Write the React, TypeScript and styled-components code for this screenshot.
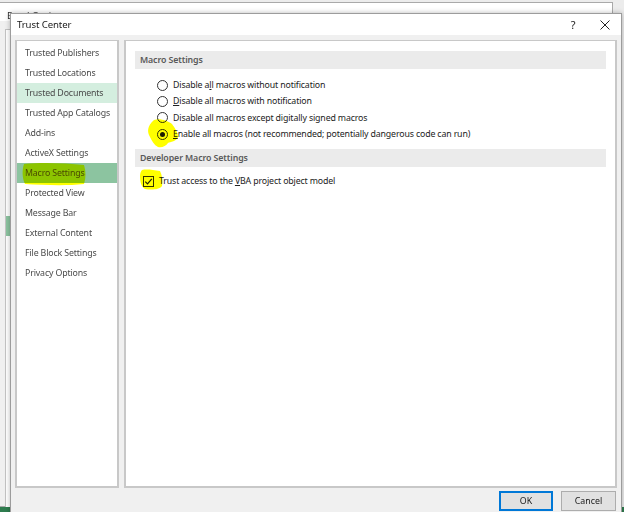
import React from "react";
import styled, { createGlobalStyle } from "styled-components";

const Global = createGlobalStyle`
  html, body { margin: 0; padding: 0; }
  body { background: #ececec; overflow: hidden; font-family: "Segoe UI", "Noto Sans", "Open Sans", sans-serif; }
`;

const Desktop = styled.div`
  position: relative;
  width: 624px;
  height: 512px;
  overflow: hidden;
  background: #ececec;
`;

const ExcelStrip = styled.div`
  position: absolute;
  left: 0;
  bottom: 0;
  width: 624px;
  height: 5px;
  background: #2f7d4f;
`;

const BackWindow = styled.div`
  position: absolute;
  left: -4px;
  top: 2px;
  width: 615px;
  height: 503px;
  background: #f0f0f0;
  border: 1px solid #a9a9a9;
  display: flex;
  flex-direction: column;
`;

const BackTitle = styled.div`
  box-sizing: border-box;
  height: 20px;
  background: #ffffff;
  display: flex;
  align-items: flex-start;
  padding: 7px 0 0 10px;
  font-size: 9.5px;
  color: #333;
  line-height: 11px;
`;

const BackTitleText = styled.span`
  flex: 1;
`;

const BackBody = styled.div`
  flex: 1;
  padding: 8px 0 0 8px;
  display: flex;
`;

const BackList = styled.div`
  width: 160px;
  height: 446px;
  background: #fff;
  border: 1px solid #c3c3c3;
  display: flex;
  flex-direction: column;
  padding-top: 186px;
`;

const BackSelected = styled.div`
  height: 20px;
  background: #8cc4a0;
`;

const Window = styled.div`
  position: absolute;
  left: 10px;
  top: 13px;
  width: 610px;
  height: 505px;
  background: #f0f0f0;
  border: 1px solid #9c9c9c;
  box-shadow: 0 0 5px rgba(0, 0, 0, 0.28);
  display: flex;
  flex-direction: column;
`;

const TitleBar = styled.div`
  height: 21px;
  background: #ffffff;
  display: flex;
  align-items: center;
  padding-left: 6px;
  font-size: 9.6px;
  letter-spacing: -0.1px;
  color: #1a1a1a;
`;

const TitleText = styled.span`
  flex: 1;
`;

const TitleButton = styled.div`
  width: 32px;
  height: 21px;
  display: flex;
  align-items: center;
  justify-content: center;
  font-size: 11px;
  color: #222;
`;

const Body = styled.div`
  flex: 1;
  display: flex;
  flex-direction: column;
  padding: 5px 4px 0 4px;
`;

const Panels = styled.div`
  display: flex;
  gap: 5px;
  height: 448px;
`;

const Panel = styled.div<{ $width?: number }>`
  box-sizing: border-box;
  ${(p) => (p.$width ? `width: ${p.$width}px;` : "flex: 1;")}
  height: 100%;
  background: #ffffff;
  border: 2px solid #c8c8c8;
  border-top-width: 1px;
  position: relative;
`;

const NavList = styled.div`
  display: flex;
  flex-direction: column;
  padding-top: 2px;
`;

const NavItem = styled.div<{ $state?: "hover" | "active" }>`
  height: 20px;
  display: flex;
  align-items: center;
  padding-left: 8px;
  font-size: 8.8px;
  letter-spacing: -0.15px;
  color: #4a4a4a;
  white-space: nowrap;
  position: relative;
  background: ${(p) =>
    p.$state === "active" ? "#8cc4a0" : p.$state === "hover" ? "#d4eedf" : "transparent"};
`;

const Content = styled.div`
  display: flex;
  flex-direction: column;
  padding: 10px 9px 0 9px;
`;

const SectionHeader = styled.div`
  height: 18px;
  background: #ebebeb;
  display: flex;
  align-items: center;
  padding-left: 5px;
  font-size: 8.8px;
  letter-spacing: -0.1px;
  font-weight: 600;
  color: #595959;
`;

const OptionGroup = styled.div`
  display: flex;
  flex-direction: column;
  padding: 8px 0 7px 22px;
`;

const OptionRow = styled.div`
  height: 16.3px;
  display: flex;
  align-items: center;
  gap: 5px;
  font-size: 8.8px;
  letter-spacing: -0.15px;
  color: #222;
  white-space: nowrap;
`;

const CheckRow = styled(OptionRow)`
  padding: 7px 0 0 8px;
  height: 14px;
  gap: 5px;
`;

const Radio = styled.span<{ $checked?: boolean }>`
  box-sizing: border-box;
  width: 11px;
  height: 11px;
  border-radius: 50%;
  border: 1px solid #333;
  background: #fff;
  display: flex;
  align-items: center;
  justify-content: center;
  flex: none;
  &::after {
    content: "";
    width: 5px;
    height: 5px;
    border-radius: 50%;
    background: ${(p) => (p.$checked ? "#1a1a1a" : "transparent")};
  }
`;

const Check = styled.span`
  box-sizing: border-box;
  width: 11px;
  height: 11px;
  border: 1px solid #333;
  background: #fff;
  display: flex;
  align-items: center;
  justify-content: center;
  flex: none;
`;

const U = styled.span`
  text-decoration: underline;
  text-underline-offset: 1px;
`;

const Marker = styled.svg`
  position: absolute;
  mix-blend-mode: multiply;
  pointer-events: none;
`;

const Footer = styled.div`
  display: flex;
  justify-content: flex-end;
  gap: 8px;
  padding: 3px 1px 0 0;
`;

const Button = styled.div<{ $default?: boolean }>`
  box-sizing: border-box;
  width: ${(p) => (p.$default ? 54 : 55)}px;
  height: 20px;
  background: #e1e1e1;
  border: ${(p) => (p.$default ? "2px solid #0078d7" : "1px solid #adadad")};
  display: flex;
  align-items: center;
  justify-content: center;
  font-size: 8.8px;
  color: #1a1a1a;
`;

const navItems = [
  "Trusted Publishers",
  "Trusted Locations",
  "Trusted Documents",
  "Trusted App Catalogs",
  "Add-ins",
  "ActiveX Settings",
  "Macro Settings",
  "Protected View",
  "Message Bar",
  "External Content",
  "File Block Settings",
  "Privacy Options",
];

export default function App() {
  return (
    <>
      <Global />
      <Desktop>
        <BackWindow>
          <BackTitle>
            <BackTitleText>Excel Options</BackTitleText>
          </BackTitle>
          <BackBody>
            <BackList>
              <BackSelected />
            </BackList>
          </BackBody>
        </BackWindow>
        <ExcelStrip />
        <Window>
          <TitleBar>
            <TitleText>Trust Center</TitleText>
            <TitleButton>?</TitleButton>
            <TitleButton>
              <svg width="10" height="10" viewBox="0 0 10 10">
                <path d="M0.5 0.5 L9.5 9.5 M9.5 0.5 L0.5 9.5" stroke="#222" strokeWidth="1" />
              </svg>
            </TitleButton>
          </TitleBar>
          <Body>
            <Panels>
              <Panel $width={104}>
                <NavList>
                  {navItems.map((n) => (
                    <NavItem
                      key={n}
                      $state={n === "Macro Settings" ? "active" : n === "Trusted Documents" ? "hover" : undefined}
                    >
                      {n}
                    </NavItem>
                  ))}
                </NavList>
                <Marker width="66" height="26" viewBox="0 0 66 26" style={{ left: 4, top: 120 }}>
                  <path
                    d="M3 3 C20 1 45 2 63 4 C65 10 65 17 63 23 C45 25 22 24 4 23 C1 17 1 9 3 3 Z"
                    fill="#ffff00"
                  />
                </Marker>
              </Panel>
              <Panel>
                <Content>
                  <SectionHeader>Macro Settings</SectionHeader>
                  <OptionGroup>
                    <OptionRow>
                      <Radio />
                      <span>
                        Disable a<U>l</U>l macros without notification
                      </span>
                    </OptionRow>
                    <OptionRow>
                      <Radio />
                      <span>
                        <U>D</U>isable all macros with notification
                      </span>
                    </OptionRow>
                    <OptionRow>
                      <Radio />
                      <span>Disable all macros except digitally signed macros</span>
                    </OptionRow>
                    <OptionRow>
                      <Radio $checked />
                      <span>
                        <U>E</U>nable all macros (not recommended; potentially dangerous code can run)
                      </span>
                    </OptionRow>
                  </OptionGroup>
                  <SectionHeader>Developer Macro Settings</SectionHeader>
                  <CheckRow>
                    <Check>
                      <svg width="9" height="9" viewBox="0 0 9 9">
                        <path d="M1.3 4.6 L3.5 6.8 L7.8 1.8" stroke="#222" strokeWidth="1.2" fill="none" />
                      </svg>
                    </Check>
                    <span>
                      Trust access to the <U>V</U>BA project object model
                    </span>
                  </CheckRow>
                </Content>
                <Marker width="34" height="31" viewBox="0 0 34 31" style={{ left: 20, top: 77 }}>
                  <path
                    d="M8 2 C14 0 22 3 26 6 C28 9 32 14 32 19 C31 23 24 24 22 25 C20 28 16 30 12 29 C8 27 6 23 4 19 C1 14 1 8 8 2 Z"
                    fill="#ffff00"
                  />
                </Marker>
                <Marker width="25" height="22" viewBox="0 0 25 22" style={{ left: 13, top: 128 }}>
                  <path
                    d="M3 1 C8 0 14 1 21 2 C23 6 24 12 23 17 C20 21 12 21 6 20 C2 18 1 12 1 7 C1 4 2 2 3 1 Z"
                    fill="#ffff00"
                  />
                </Marker>
              </Panel>
            </Panels>
            <Footer>
              <Button $default>OK</Button>
              <Button>Cancel</Button>
            </Footer>
          </Body>
        </Window>
      </Desktop>
    </>
  );
}
